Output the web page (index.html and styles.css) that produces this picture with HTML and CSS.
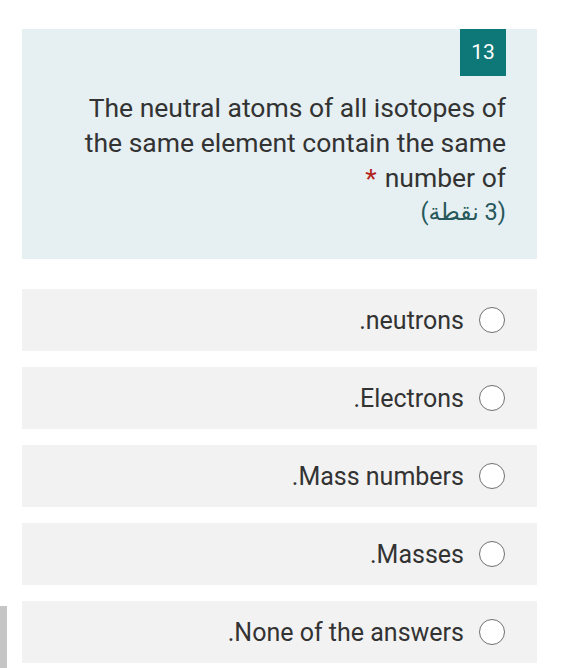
FILE: index.html
```html
<!DOCTYPE html>
<html lang="ar" dir="rtl">
<head>
    <meta charset="UTF-8">
    <meta name="viewport" content="width=device-width, initial-scale=1.0">
    <title>Quiz</title>
    <link rel="stylesheet" href="styles.css">
</head>
<body>
    <div class="page">
        <div class="question-card">
            <div class="badge">13</div>
            <div class="question-text">
                <span dir="ltr">The neutral atoms of all isotopes of the same element contain the same number of</span><span class="required">*</span>
            </div>
            <div class="points">(3 نقطة)</div>
        </div>

        <div class="options">
            <label class="option"><span class="radio"></span><span class="option-text">neutrons.</span></label>
            <label class="option"><span class="radio"></span><span class="option-text">Electrons.</span></label>
            <label class="option"><span class="radio"></span><span class="option-text">Mass numbers.</span></label>
            <label class="option"><span class="radio"></span><span class="option-text">Masses.</span></label>
            <label class="option"><span class="radio"></span><span class="option-text">None of the answers.</span></label>
        </div>
    </div>
    <div class="side-bar"></div>
</body>
</html>
```

FILE: styles.css
```css
body {
    font-family: Roboto, "DejaVu Sans", sans-serif;
    background-color: #fff;
    color: #333;
    margin: 0;
    padding: 0;
}

.page {
    padding: 29px 24px 0 22px;
}

.question-card {
    background-color: #e6eff2;
    padding: 0 31px 29px 47px;
    text-align: right;
}

.badge {
    display: inline-block;
    width: 46px;
    height: 47px;
    line-height: 47px;
    text-align: center;
    background-color: #0e7878;
    color: #fff;
    font-size: 21px;
}

.question-text {
    margin-top: 14px;
    font-size: 26.5px;
    line-height: 35px;
}

.required {
    color: #b3261e;
    margin-right: 8px;
}

.points {
    font-size: 23.5px;
    line-height: 35px;
    color: #26585c;
}

.options {
    display: flex;
    flex-direction: column;
    gap: 16px;
    margin-top: 30px;
}

.option {
    display: flex;
    align-items: center;
    gap: 15px;
    height: 62px;
    padding-right: 32px;
    background-color: #f2f2f2;
    font-size: 25px;
}

.radio {
    width: 24px;
    height: 24px;
    border: 1.5px solid #707070;
    border-radius: 50%;
    background-color: #fff;
}

.side-bar {
    position: fixed;
    left: 0;
    bottom: 0;
    width: 7px;
    height: 62px;
    background-color: #c6c6c6;
}
```
